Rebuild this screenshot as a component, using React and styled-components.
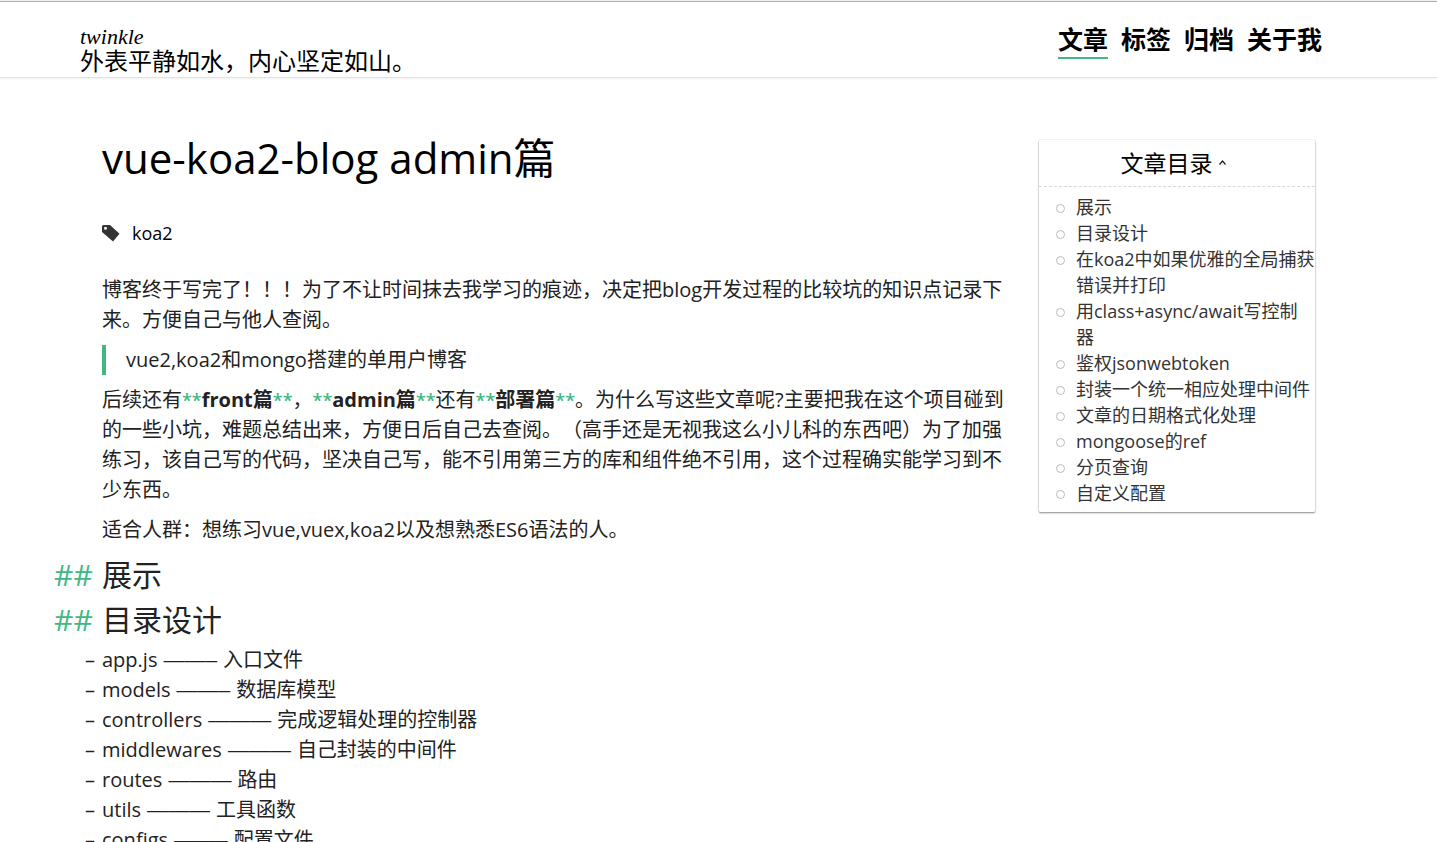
import React, { useState } from 'react';
import styled, { createGlobalStyle, css } from 'styled-components';

const green = '#41b883';
const sans = "'Open Sans', 'Noto Sans CJK SC', sans-serif";
const brush = "'STXingkai', 'Noto Sans CJK SC', sans-serif";

const GlobalStyle = createGlobalStyle`
  * {
    box-sizing: border-box;
  }
  html {
    scrollbar-width: none;
  }
  body {
    margin: 0;
    background: #fff;
    color: #222;
    font-family: ${sans};
    font-size: 20px;
    line-height: 30px;
    text-spacing-trim: space-all;
  }
  a {
    color: inherit;
    text-decoration: none;
  }
`;

const Header = styled.header`
  display: flex;
  justify-content: space-between;
  align-items: flex-start;
  height: 78px;
  padding: 25px 115px 0 80px;
  border-top: 1px solid #f0f0f0;
  border-bottom: 1px solid #e2e2e2;
  box-shadow: inset 0 1px 0 #b0b0b0, 0 1px 2px rgba(0, 0, 0, 0.06);
  color: #000;
`;
const Brand = styled.a`
  display: block;
`;
const SiteName = styled.div`
  font-family: 'Liberation Serif', serif;
  font-size: 22px;
  font-style: italic;
  line-height: 22px;
`;
const Slogan = styled.div`
  font-family: ${brush};
  font-size: 24px;
  font-weight: 400;
  line-height: 24px;
`;
const Nav = styled.nav`
  display: flex;
  gap: 13px;
`;
const NavLink = styled.a`
  padding-bottom: 6px;
  font-family: ${brush};
  font-size: 25px;
  font-weight: 700;
  line-height: 25px;
  border-bottom: 2px solid transparent;
  ${({ $active }) =>
    $active &&
    css`
      border-color: ${green};
    `};
`;

const Page = styled.div`
  display: flex;
  align-items: flex-start;
  gap: 29px;
  padding: 50px 122px 0 102px;
`;
const Article = styled.article`
  flex: 1;
  min-width: 0;
`;
const Title = styled.h1`
  margin: 0;
  color: #000;
  font-size: 42px;
  font-weight: 400;
  line-height: 60px;
`;
const Tags = styled.div`
  display: flex;
  align-items: center;
  gap: 12px;
  margin: 30px 0 27px;
  color: #000;
  font-size: 18px;
`;
const Paragraph = styled.p`
  margin: 0 0 10px;
`;
const Quote = styled.blockquote`
  margin: 0 0 10px;
  padding-left: 20px;
  border-left: 4px solid ${green};
`;
const Strong = styled.strong`
  &::before,
  &::after {
    content: '**';
    color: ${green};
    font-size: 18px;
    font-weight: 600;
  }
`;
const Heading = styled.h2`
  display: flex;
  margin: 0 0 0 -48px;
  padding-bottom: 5px;
  font-size: 30px;
  font-weight: 400;
  line-height: 40px;
  &::before {
    content: '##';
    width: 48px;
    color: ${green};
  }
`;
const FileList = styled.ul`
  margin: 0;
  padding: 0;
  list-style: none;
`;
const FileItem = styled.li`
  display: flex;
  gap: 6px;
  margin-left: -17px;
  &::before {
    content: '–';
    width: 11px;
  }
`;
const Dash = styled.span`
  font-family: 'Liberation Sans', sans-serif;
  font-size: 21px;
`;

const Toc = styled.aside`
  width: 276px;
  margin-top: 12px;
  border-radius: 1px;
  box-shadow: 0 1px 2px rgba(0, 0, 0, 0.45), 0 0 1px rgba(0, 0, 0, 0.3);
`;
const TocToggle = styled.button`
  display: flex;
  justify-content: center;
  align-items: center;
  gap: 6px;
  width: 100%;
  height: 47px;
  padding: 0 8px 2px 0;
  border: 0;
  border-bottom: 1px dashed #d8d8d8;
  background: none;
  color: #000;
  font-family: ${sans};
  font-size: 23px;
  cursor: pointer;
`;
const TocList = styled.ul`
  margin: 0 -2px 0 0;
  padding: 7px 0 6px 35px;
  color: #333;
  font-size: 18px;
  line-height: 26px;
  list-style: none;
  white-space: pre-line;
`;
const TocItem = styled.li`
  display: flex;
  margin-left: -18px;
  &::before {
    content: '';
    flex: none;
    width: 7px;
    height: 7px;
    margin: 10px 11px 0 0;
    border: 1px solid #bbb;
    border-radius: 50%;
  }
`;

const nav = ['文章', '标签', '归档', '关于我'];

const toc = [
  '展示',
  '目录设计',
  '在koa2中如果优雅的全局捕获错误并打印',
  '用class+async/await写控制\n器',
  '鉴权jsonwebtoken',
  '封装一个统一相应处理中间件',
  '文章的日期格式化处理',
  'mongoose的ref',
  '分页查询',
  '自定义配置',
];

const files = [
  { name: 'app.js', dash: '——–', text: '入口文件' },
  { name: 'models', dash: '——–', text: '数据库模型' },
  { name: 'controllers', dash: '———', text: '完成逻辑处理的控制器' },
  { name: 'middlewares', dash: '———', text: '自己封装的中间件' },
  { name: 'routes', dash: '———', text: '路由' },
  { name: 'utils', dash: '———', text: '工具函数' },
  { name: 'configs', dash: '——–', text: '配置文件' },
];

const TagIcon = () => (
  <svg width="18" height="18" viewBox="0 0 18 18" aria-hidden="true">
    <path
      fill="#333"
      fillRule="evenodd"
      d="M1.500 1H8l9.500 8.700-6.500 7.800L0 8V2.500Q0 1 1.500 1ZM3.500 2.700a1.500 1.500 0 1 0 0 3 1.500 1.500 0 0 0 0-3Z"
    />
  </svg>
);

const Caret = () => (
  <svg width="7" height="5" viewBox="0 0 7 5" aria-hidden="true">
    <path d="M.5 4.500 3.500 1l3 3.500" fill="none" stroke="#222" strokeWidth="1.300" />
  </svg>
);

export default function App() {
  const [open, setOpen] = useState(true);

  return (
    <>
      <GlobalStyle />
      <Header>
        <Brand href="#home">
          <SiteName>twinkle</SiteName>
          <Slogan>外表平静如水，内心坚定如山。</Slogan>
        </Brand>
        <Nav>
          {nav.map((label, i) => (
            <NavLink key={label} href={`#${label}`} $active={i === 0}>
              {label}
            </NavLink>
          ))}
        </Nav>
      </Header>
      <Page>
        <Article>
          <Title>vue-koa2-blog admin篇</Title>
          <Tags>
            <TagIcon />
            <a href="#koa2">koa2</a>
          </Tags>
          <Paragraph>
            博客终于写完了！！！为了不让时间抹去我学习的痕迹，决定把blog开发过程的比较坑的知识点记录下来。方便自己与他人查阅。
          </Paragraph>
          <Quote>vue2,koa2和mongo搭建的单用户博客</Quote>
          <Paragraph>
            后续还有<Strong>front篇</Strong>，<Strong>admin篇</Strong>还有<Strong>部署篇</Strong>
            。为什么写这些文章呢?主要把我在这个项目碰到的一些小坑，难题总结出来，方便日后自己去查阅。（高手还是无视我这么小儿科的东西吧）为了加强练习，该自己写的代码，坚决自己写，能不引用第三方的库和组件绝不引用，这个过程确实能学习到不少东西。
          </Paragraph>
          <Paragraph>适合人群：想练习vue,vuex,koa2以及想熟悉ES6语法的人。</Paragraph>
          <Heading>展示</Heading>
          <Heading>目录设计</Heading>
          <FileList>
            {files.map(({ name, dash, text }) => (
              <FileItem key={name}>
                <span>{name}</span>
                <Dash>{dash}</Dash>
                <span>{text}</span>
              </FileItem>
            ))}
          </FileList>
        </Article>
        <Toc>
          <TocToggle type="button" aria-expanded={open} onClick={() => setOpen(!open)}>
            文章目录
            <Caret />
          </TocToggle>
          {open && (
            <TocList>
              {toc.map(item => (
                <TocItem key={item}>
                  <a href={`#${item.replace('\n', '')}`}>{item}</a>
                </TocItem>
              ))}
            </TocList>
          )}
        </Toc>
      </Page>
    </>
  );
}
